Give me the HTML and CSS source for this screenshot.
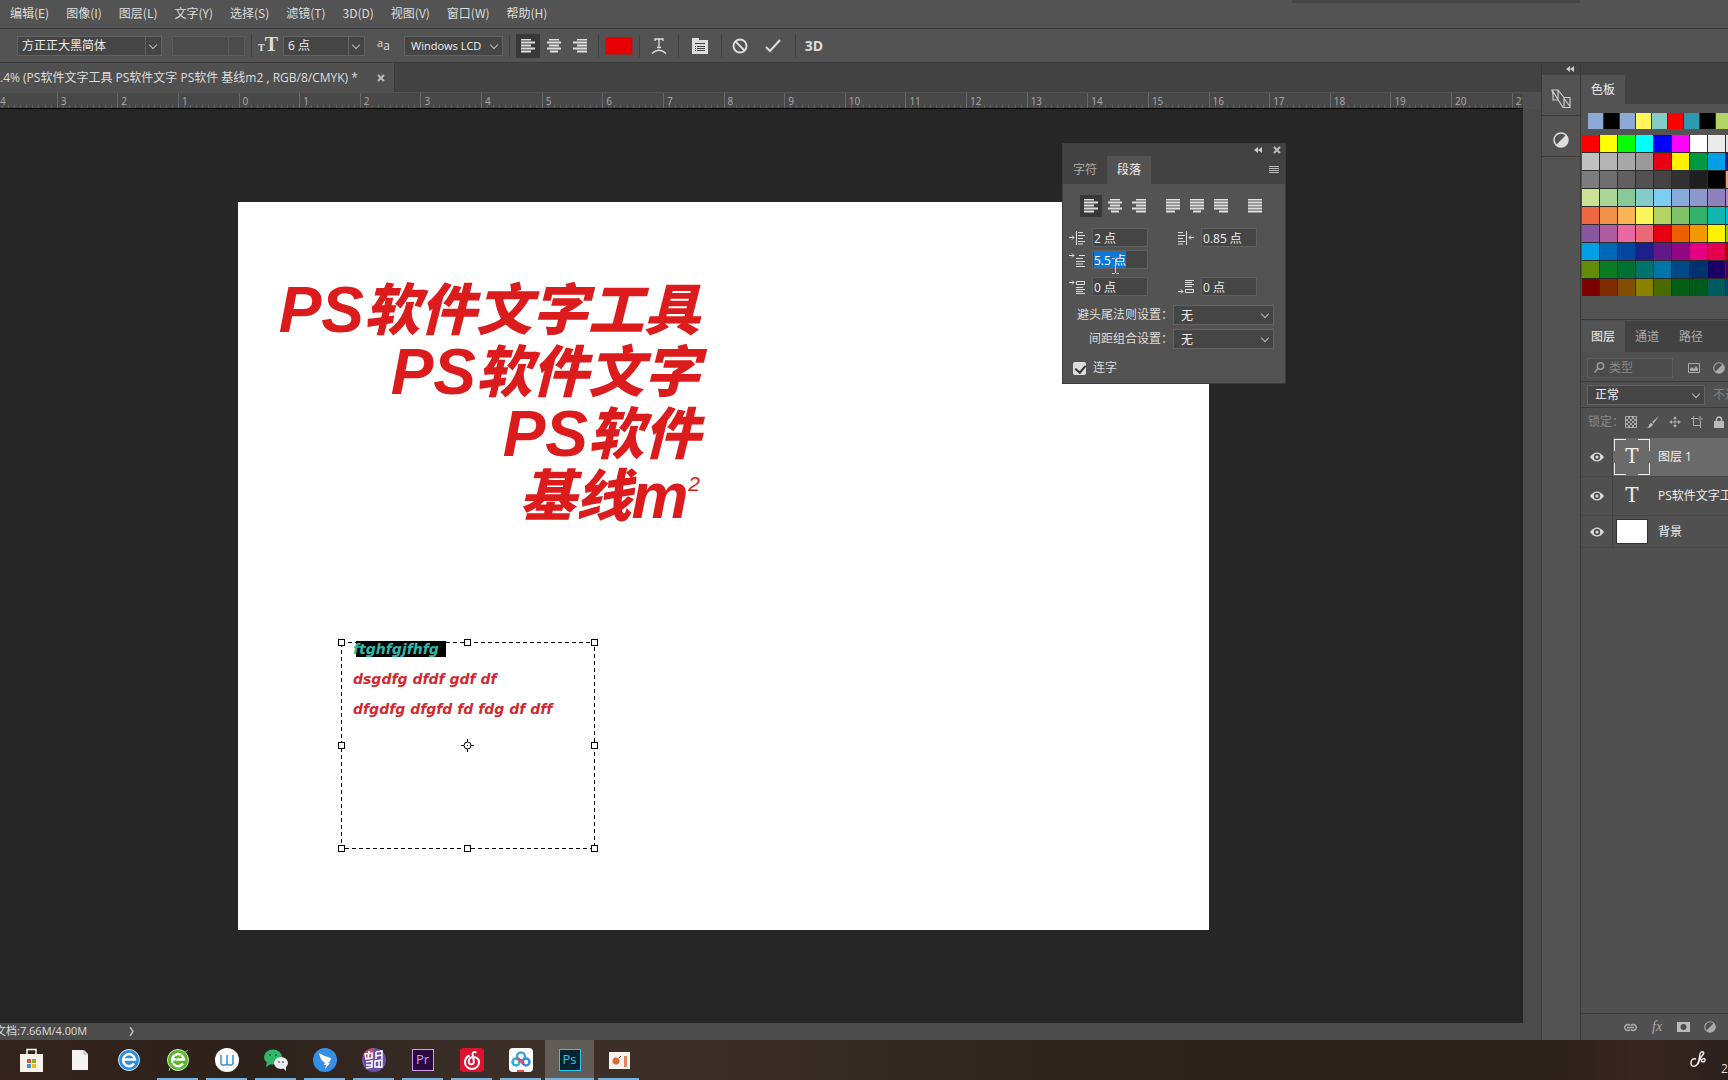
FILE: index.html
```html
<!DOCTYPE html>
<html lang="zh-CN">
<head>
    <meta charset="UTF-8">
    <meta name="viewport" content="width=device-width, initial-scale=1.0">
    <title>PS软件文字工具</title>
    <link rel="stylesheet" href="styles.css">
</head>
<body>
    <!-- 公用图标 -->
    <svg class="symbols" aria-hidden="true">
        <symbol id="i-left" viewBox="0 0 14 14"><path d="M0 .5h10M0 3.5h14M0 6.5h10M0 9.5h14M0 12.5h10"/></symbol>
        <symbol id="i-center" viewBox="0 0 14 14"><path d="M2 .5h10M0 3.5h14M2 6.5h10M0 9.5h14M3 12.5h8"/></symbol>
        <symbol id="i-right" viewBox="0 0 14 14"><path d="M4 .5h10M0 3.5h14M4 6.5h10M0 9.5h14M4 12.5h10"/></symbol>
        <symbol id="i-jleft" viewBox="0 0 14 14"><path d="M0 .5h14M0 3.5h14M0 6.5h14M0 9.5h14M0 12.5h9"/></symbol>
        <symbol id="i-jcenter" viewBox="0 0 14 14"><path d="M0 .5h14M0 3.5h14M0 6.5h14M0 9.5h14M3 12.5h8"/></symbol>
        <symbol id="i-jright" viewBox="0 0 14 14"><path d="M0 .5h14M0 3.5h14M0 6.5h14M0 9.5h14M5 12.5h9"/></symbol>
        <symbol id="i-jall" viewBox="0 0 14 14"><path d="M0 .5h14M0 3.5h14M0 6.5h14M0 9.5h14M0 12.5h14"/></symbol>
        <symbol id="i-collapse" viewBox="0 0 8 6"><path d="M4 0v6L0 3zM8 0v6L4 3z"/></symbol>
        <symbol id="i-close" viewBox="0 0 8 8"><path d="M1 1l6 6M7 1L1 7"/></symbol>
        <symbol id="i-half" viewBox="0 0 16 16"><circle cx="8" cy="8" r="7" fill="none" stroke="currentColor" stroke-width="1.5"/><path d="M13 3A7 7 0 0 1 3 13z" fill="currentColor"/></symbol>
        <symbol id="i-eye" viewBox="0 0 14 10"><path d="M0 5Q7-4 14 5Q7 14 0 5z" fill="#ddd"/><circle cx="7" cy="5" r="3.2" fill="#4f4f4f"/><circle cx="7" cy="5" r="1.5" fill="#ddd"/></symbol>
    </svg>

    <nav class="menubar">
        <button>编辑(E)</button>
        <button>图像(I)</button>
        <button>图层(L)</button>
        <button>文字(Y)</button>
        <button>选择(S)</button>
        <button>滤镜(T)</button>
        <button>3D(D)</button>
        <button>视图(V)</button>
        <button>窗口(W)</button>
        <button>帮助(H)</button>
        <div class="screen-tip"></div>
    </nav>

    <div class="options">
        <span class="drop drop-split w-font"><select aria-label="字体"><option>方正正大黑简体</option></select></span>
        <span class="drop drop-split w-style off"><select aria-label="字体样式" disabled><option></option></select></span>
        <i class="sep"></i>
        <span class="size-icon"><small>T</small>T</span>
        <span class="drop drop-split w-size"><select aria-label="字体大小"><option>6 点</option></select></span>
        <span class="aa-icon"><sup>a</sup>a</span>
        <span class="drop w-aa"><select aria-label="消除锯齿"><option>Windows LCD</option></select></span>
        <i class="sep"></i>
        <span class="group">
            <button class="tool active" aria-label="左对齐"><svg class="lines"><use href="#i-left"/></svg></button>
            <button class="tool" aria-label="居中"><svg class="lines"><use href="#i-center"/></svg></button>
            <button class="tool" aria-label="右对齐"><svg class="lines"><use href="#i-right"/></svg></button>
        </span>
        <i class="sep"></i>
        <button class="color" aria-label="文本颜色"></button>
        <i class="sep"></i>
        <button class="tool w-warp" aria-label="变形文字"><svg width="16" height="18" viewBox="0 0 16 18" fill="none" stroke="#ddd" stroke-width="1.3"><path d="M4 4V2h8v2M8 2v8M6 10.500h4M1 16.500Q8 10 15 16.500"/></svg></button>
        <i class="sep"></i>
        <button class="tool w-panel" aria-label="面板"><svg width="16" height="16" viewBox="0 0 16 16"><path d="M0 0h7v2h9v14H0z" fill="#ddd"/><path d="M3 5.500h10M3 8.500h1M5 8.500h8M3 10.500h1M5 10.500h8M3 12.500h1M5 12.500h8" stroke="#444"/></svg></button>
        <i class="sep"></i>
        <button class="tool" aria-label="取消"><svg width="16" height="16" viewBox="0 0 16 16" fill="none" stroke="#ddd" stroke-width="2"><circle cx="8" cy="8" r="6.500"/><path d="M3.500 3.500l9 9"/></svg></button>
        <button class="tool w-ok" aria-label="提交"><svg width="16" height="14" viewBox="0 0 16 14" fill="none" stroke="#ddd" stroke-width="2"><path d="M1 8l4 4L15 1"/></svg></button>
        <i class="sep"></i>
        <button class="tool three-d">3D</button>
    </div>

    <div class="workspace">
        <section class="document">
            <div class="doc-tabs">
                <div class="doc-tab"><span>.4% (PS软件文字工具 PS软件文字 PS软件 基线m2 , RGB/8/CMYK) *</span><button class="close" aria-label="关闭"><svg class="x"><use href="#i-close"/></svg></button></div>
            </div>
            <div class="ruler" id="ruler"></div>
            <div class="view">
                <div class="canvas">
                    <div class="page">
                        <div class="title">
                            <p><span>PS</span>软件文字工具</p>
                            <p><span>PS</span>软件文字</p>
                            <p><span>PS</span>软件</p>
                            <p>基线<span>m</span><sup>2</sup></p>
                        </div>
                        <div class="textbox">
                            <p><mark>ftghfgjfhfg</mark></p>
                            <p>dsgdfg dfdf gdf df</p>
                            <p>dfgdfg dfgfd fd fdg df dff</p>
                            <svg class="frame">
                                <rect width="100%" height="100%"/>
                            </svg>
                            <i class="handle tl"></i><i class="handle tc"></i><i class="handle tr"></i>
                            <i class="handle ml"></i><i class="handle mr"></i>
                            <i class="handle bl"></i><i class="handle bc"></i><i class="handle br"></i>
                            <svg class="pivot" width="13" height="13" viewBox="0 0 13 13" fill="none" stroke="#000"><circle cx="6.500" cy="6.500" r="3.500"/><path d="M6.500 0v3M6.500 10v3M0 6.500h3M10 6.500h3M6 6.500h1"/></svg>
                        </div>
                    </div>

                    <aside class="para">
                        <header>
                            <div class="para-top">
                                <svg class="tri"><use href="#i-collapse"/></svg>
                                <button class="close" aria-label="关闭面板"><svg class="x"><use href="#i-close"/></svg></button>
                            </div>
                            <div class="tabs">
                                <button>字符</button>
                                <button class="on">段落</button>
                                <svg class="menu" width="10" height="8" viewBox="0 0 10 8" stroke="#bbb"><path d="M0 .5h10M0 2.500h10M0 4.500h10M0 6.500h10"/></svg>
                            </div>
                        </header>
                        <div class="aligns">
                            <button class="tool active" aria-label="左对齐文本"><svg class="lines"><use href="#i-left"/></svg></button>
                            <button class="tool" aria-label="居中对齐文本"><svg class="lines"><use href="#i-center"/></svg></button>
                            <button class="tool" aria-label="右对齐文本"><svg class="lines"><use href="#i-right"/></svg></button>
                            <button class="tool gap" aria-label="最后一行左对齐"><svg class="lines"><use href="#i-jleft"/></svg></button>
                            <button class="tool" aria-label="最后一行居中对齐"><svg class="lines"><use href="#i-jcenter"/></svg></button>
                            <button class="tool" aria-label="最后一行右对齐"><svg class="lines"><use href="#i-jright"/></svg></button>
                            <button class="tool gap" aria-label="全部对齐"><svg class="lines"><use href="#i-jall"/></svg></button>
                        </div>
                        <div class="indents">
                            <label><svg viewBox="0 0 16 14"><path d="M0 6.500h5M3 4.500l2 2-2 2M7.500 0v14M9 1.500h5M9 4.500h7M9 7.500h5M9 10.500h7M9 13h5"/></svg><input type="text" value="2 点" aria-label="左缩进"></label>
                            <label><svg viewBox="0 0 16 14"><path d="M0 1.500h5M0 4.500h7M0 7.500h5M0 10.500h7M0 13h5M8.500 0v14M16 6.500h-5M13 4.500l-2 2 2 2"/></svg><input type="text" value="0.85 点" aria-label="右缩进"></label>
                            <label><svg viewBox="0 0 16 14"><path d="M0 2.500h5M3 .5l2 2-2 2M10 2.500h6M7 5.500h7M7 8.500h9M7 11h7M7 13.500h9"/></svg><input type="text" id="first" value="5.5 点" aria-label="首行缩进"></label>
                        </div>
                        <div class="indents spacing">
                            <label><svg viewBox="0 0 16 14"><path d="M0 2.500h5M3 .5l2 2-2 2M7.500 1.500h8v3h-8zM7 7.500h7M7 9.500h9M7 11.500h7M7 13.500h9"/></svg><input type="text" value="0 点" aria-label="段前添加空格"></label>
                            <label><svg viewBox="0 0 16 14"><path d="M0 11.500h5M3 9.500l2 2-2 2M7 .5h9M7 2.500h7M7 4.500h9M7 6.500h7M7.500 9.500h8v3h-8z"/></svg><input type="text" value="0 点" aria-label="段后添加空格"></label>
                        </div>
                        <div class="rules">
                            <label for="kinsoku">避头尾法则设置：</label>
                            <span class="drop"><select id="kinsoku"><option>无</option></select></span>
                            <label for="mojikumi">间距组合设置：</label>
                            <span class="drop"><select id="mojikumi"><option>无</option></select></span>
                        </div>
                        <label class="hyphen"><input type="checkbox" checked>连字</label>
                        <svg class="caret" width="7" height="16" viewBox="0 0 7 16" fill="none" stroke="#ccc"><path d="M0 .5h2.500l1 1 1-1H7M3.500 1v14M0 15.500h2.500l1-1 1 1H7"/></svg>
                    </aside>
                </div>
                <div class="scroll"></div>
            </div>
            <footer class="status"><span>文档:7.66M/4.00M</span><svg width="5" height="9" viewBox="0 0 5 9" fill="none" stroke="#bbb" stroke-width="1.500"><path d="M1 0l3 4.500L1 9"/></svg></footer>
        </section>

        <aside class="strip">
            <div class="strip-top"><svg class="tri"><use href="#i-collapse"/></svg></div>
            <button aria-label="历史"><svg width="20" height="20" viewBox="0 0 20 20" fill="none" stroke="#ccc" stroke-width="1.200"><path d="M1 1h6v10H2V5zM1 1l11 17.500h7V8.500h-6v9M7 1l6 7.500M13 9.500l6 8"/></svg></button>
            <button aria-label="调整"><svg width="16" height="16"><use href="#i-half"/></svg></button>
        </aside>

        <aside class="panels">
            <div class="panels-top"></div>
            <section class="swatch-panel">
                <div class="tabs"><button class="on">色板</button></div>
                <div class="recent" id="recent"></div>
                <div class="swatches" id="swatches"></div>
            </section>
            <section class="layers">
                <div class="tabs">
                    <button class="on">图层</button>
                    <button>通道</button>
                    <button>路径</button>
                </div>
                <div class="filter">
                    <label class="search"><svg width="11" height="11" viewBox="0 0 11 11" fill="none" stroke="#999" stroke-width="1.500"><circle cx="6.500" cy="4" r="3.200"/><path d="M4 6.500L.5 10.500"/></svg><input type="text" placeholder="类型" aria-label="类型"></label>
                    <svg width="12" height="10" viewBox="0 0 12 10"><path d="M.5.500h11v9H.5z" fill="none" stroke="#aaa"/><path d="M2 8V6l2-2 2 2 2-3 2 3v2z" fill="#aaa"/></svg>
                    <svg width="12" height="12"><use href="#i-half"/></svg>
                </div>
                <div class="blend">
                    <span class="drop"><select aria-label="混合模式"><option>正常</option></select></span>
                    <span class="dim">不透明度</span>
                </div>
                <div class="locks">
                    <span>锁定：</span>
                    <svg viewBox="0 0 12 12"><path d="M.5.500h11v11H.5z" fill="none" stroke="#aaa"/><path d="M3 1h2v2H3zM7 1h2v2H7zM1 3h2v2H1zM5 3h2v2H5zM9 3h2v2H9zM3 5h2v2H3zM7 5h2v2H7zM1 7h2v2H1zM5 7h2v2H5zM9 7h2v2H9zM3 9h2v2H3zM7 9h2v2H7z" fill="#aaa"/></svg>
                    <svg viewBox="0 0 12 12"><path d="M12 0L5 6l1.500 1.500zM4.500 7L6 8.500Q4 12 0 12q2-1 2-3 1-2 2.500-2z" fill="#bbb"/></svg>
                    <svg viewBox="0 0 12 12"><path d="M6 1v10M1 6h10" stroke="#aaa"/><path d="M6 0l2 3H4zM6 12l2-3H4zM0 6l3-2v4zM12 6L9 4v4z" fill="#aaa"/></svg>
                    <svg viewBox="0 0 12 12"><path d="M2.500 0v9.500H10M0 2.500h7l2.500 2.500v7M9 0v3h3" fill="none" stroke="#aaa"/></svg>
                    <svg viewBox="0 0 12 12"><path d="M1 5h10v7H1z" fill="#bbb"/><path d="M3.500 5V3.500a2.500 2.500 0 0 1 5 0V5" fill="none" stroke="#bbb" stroke-width="1.500"/></svg>
                </div>
                <ul class="list">
                    <li class="current"><span class="eye"><svg><use href="#i-eye"/></svg></span><span class="type corners">T</span><span>图层 1</span></li>
                    <li><span class="eye"><svg><use href="#i-eye"/></svg></span><span class="type">T</span><span>PS软件文字工具</span></li>
                    <li class="short"><span class="eye"><svg><use href="#i-eye"/></svg></span><span class="thumb"></span><span>背景</span></li>
                </ul>
                <footer>
                    <svg width="15" height="9" viewBox="0 0 15 9" fill="none" stroke="#aaa" stroke-width="1.500"><path d="M7 2.500A3 3 0 1 0 7 6.500M8 2.500A3 3 0 1 1 8 6.500M4 4.500h7"/></svg>
                    <span class="fx">fx</span>
                    <svg width="13" height="10" viewBox="0 0 13 10"><path d="M0 0h13v10H0z" fill="#bbb"/><circle cx="6.500" cy="5" r="3" fill="#4f4f4f"/></svg>
                    <svg width="12" height="12"><use href="#i-half"/></svg>
                </footer>
            </section>
        </aside>
    </div>

    <div class="taskbar">
        <button aria-label="应用商店"><svg viewBox="0 0 24 24"><path d="M8 6V1.500h9V6" fill="none" stroke="#fff" stroke-width="1.500"/><path d="M1 6h23v18H1z" fill="#f6f2ea"/><path d="M8 11h4v4H8z" fill="#e5532d"/><path d="M13 11h4v4h-4z" fill="#7db72f"/><path d="M8 16h4v4H8z" fill="#2f9be0"/><path d="M13 16h4v4h-4z" fill="#f4b822"/></svg></button>
        <button aria-label="文档"><svg viewBox="0 0 24 24"><path d="M4 2h12l4 4v16H4z" fill="#f4f4f0"/><path d="M16 2v4h4" fill="none" stroke="#aaa"/></svg></button>
        <button aria-label="浏览器"><svg viewBox="0 0 24 24"><circle cx="12" cy="12" r="10.500" fill="#2a8fe0" stroke="#dcecf8"/><path d="M17 15.500A6 6 0 1 1 18 11.500H7" fill="none" stroke="#fff" stroke-width="2.500"/></svg></button>
        <button class="run" aria-label="360浏览器"><svg viewBox="0 0 24 24"><circle cx="12" cy="12" r="10.500" fill="#5db52c" stroke="#d6f0c0"/><path d="M17 15.500A6 6 0 1 1 18 11.500H7" fill="none" stroke="#fff" stroke-width="2.500"/><path d="M3 23Q4 14 22 2" fill="none" stroke="#78cc3a"/></svg></button>
        <button class="run" aria-label="WPS"><svg viewBox="0 0 24 24"><circle cx="12" cy="12" r="12" fill="#fff"/><path d="M6 7v8q0 2 2 2h2q2 0 2-2V7M12 15q0 2 2 2h2q2 0 2-2V7" fill="none" stroke="#3d90c8" stroke-width="1.500"/></svg></button>
        <button class="run" aria-label="微信"><svg viewBox="0 0 24 24"><ellipse cx="9" cy="9" rx="9" ry="7.500" fill="#2fb668"/><path d="M3 14l-1 5 5-3z" fill="#2fb668"/><ellipse cx="17" cy="15" rx="7" ry="6" fill="#eee"/><path d="M19 20l3 3v-5z" fill="#eee"/><circle cx="6" cy="7" r="1" fill="#17663a"/><circle cx="12" cy="7" r="1" fill="#17663a"/><circle cx="15" cy="14" r="1" fill="#777"/><circle cx="19" cy="14" r="1" fill="#777"/></svg></button>
        <button class="run" aria-label="钉钉"><svg viewBox="0 0 24 24"><circle cx="12" cy="12" r="12" fill="#358fe6"/><path d="M6 5q6 4 12 5 0 3-3 5h2l-5 6 1-4h-2l1-2q-5-3-6-10z" fill="#fff"/></svg></button>
        <button class="run" aria-label="字体助手"><svg viewBox="0 0 24 24"><circle cx="12" cy="12" r="12" fill="#6950a6"/><path d="M1 8A12 12 0 0 1 12 0v12z" fill="#c04c78"/><path d="M3 6l7-1v5l-6 1zM7 3L6 11M14 4l6-1v8M14 4v7M14 8l6-1M4 14l6-1v6l-6 1M4 17h6M13 13l7-1v7h-7zM17 12v8" fill="none" stroke="#fff" stroke-width="1.500"/></svg></button>
        <button class="run" aria-label="Premiere"><span class="adobe pr">Pr</span></button>
        <button class="run" aria-label="网易云音乐"><svg viewBox="0 0 24 24"><rect width="24" height="24" rx="3" fill="#dc1230"/><path d="M16.500 4.500Q13 3 12.500 6l1.300 7a2.600 2.600 0 1 1-5 0q.2-3.500 4.200-4 6 0 6 5.500a7 6.500 0 1 1-14 0q0-5 4.500-7" fill="none" stroke="#fff" stroke-width="2"/></svg></button>
        <button class="run" aria-label="百度网盘"><svg viewBox="0 0 24 24"><rect width="24" height="24" rx="4" fill="#fff"/><g fill="none" stroke-width="2.500"><circle cx="12" cy="8.500" r="4" stroke="#3aa4e6"/><circle cx="7" cy="14" r="3.500" stroke="#2ab0e0"/><circle cx="17" cy="14" r="3.500" stroke="#3a8ae0"/><path d="M8 10q2 1 4 3 2 2 3 3" stroke="#e8455a"/></g><path d="M8 22h7v2H8z" fill="#e8455a"/></svg></button>
        <button class="run current" aria-label="Photoshop"><span class="adobe ps">Ps</span></button>
        <button class="run" aria-label="录屏"><svg viewBox="0 0 24 24"><path d="M2 4h21v17H2z" fill="#f5f1ec"/><circle cx="9" cy="13" r="3.500" fill="#d86a3c"/><path d="M17 8h3v11h-3z" fill="#e0855c"/><path d="M12 10l2-2" stroke="#555"/></svg></button>
        <svg class="pen" width="16" height="16" viewBox="0 0 16 16" fill="none" stroke="#eee" stroke-width="1.500"><path d="M6 8Q1 7 1 12q0 4 4 3 3-1 4-6l1-6q1-3 3-2t-2 5L8 13M11 9q4-3 4 0 0 3-4 1"/></svg>
        <span class="clock">2</span>
    </div>

    <script>
        const recent = ['#8ca9d8', '#000', '#8ca9d8', '#fff45c', '#85ccc8', '#f00', '#2a9bb0', '#000', '#b3d465', '#fff'];
        const swatches = [
            ['#f00', '#ff0', '#0f0', '#0ff', '#00f', '#f0f', '#fff', '#ebebeb', '#e1e1e1'],
            ['#c0c0c0', '#b4b4b4', '#a8a8a8', '#9a9a9a', '#e60012', '#fff100', '#009944', '#00a0e9', '#1d2088'],
            ['#7d7d7d', '#6f6f6f', '#606060', '#525252', '#444', '#323232', '#1f1f1f', '#000', '#f19c80'],
            ['#cce198', '#acd598', '#89c997', '#84ccc9', '#7ecef4', '#88abda', '#8c97cb', '#8f82bc', '#aa89bd'],
            ['#ec6941', '#f19149', '#f8b551', '#fff45c', '#b3d465', '#80c269', '#32b16c', '#13b5b1', '#00b7ee'],
            ['#8957a1', '#ae5da1', '#ea68a2', '#eb6877', '#e60012', '#eb6100', '#f39800', '#fff100', '#8fc31f'],
            ['#00a0e9', '#0068b7', '#00479d', '#1d2088', '#601986', '#920783', '#e4007f', '#e5004f', '#a40000'],
            ['#638c0b', '#097c25', '#007130', '#00736d', '#0075a9', '#004986', '#003270', '#1b006a', '#500047'],
            ['#7d0000', '#7f2d00', '#834e00', '#8a8000', '#486a00', '#005e15', '#005a1a', '#005b5f', '#00486a']
        ];
        const cell = c => `<i style="background:${c}"></i>`;
        document.getElementById('recent').innerHTML = recent.map(cell).join('');
        document.getElementById('swatches').innerHTML = swatches.flat().map(cell).join('');

        // 标尺从 -4 到 21
        let marks = '';
        for (let i = -4; i <= 21; i++) {
            marks += `<span>${Math.abs(i)}</span>`;
        }
        document.getElementById('ruler').innerHTML = marks;

        document.getElementById('first').select();
    </script>
</body>
</html>
```
FILE: styles.css
```css
:root {
    --unit: calc(970px / 16);
}
* {
    box-sizing: border-box;
}
body {
    margin: 0;
    height: 100vh;
    display: flex;
    flex-direction: column;
    overflow: hidden;
    background: #535353;
    color: #ddd;
    font-family: "Open Sans", "Noto Sans CJK SC", sans-serif;
    font-size: 12px;
    line-height: 18px;
}
button, input, select {
    margin: 0;
    padding: 0;
    border: 0;
    background: none;
    color: inherit;
    font: inherit;
    outline: none;
}
p, ul {
    margin: 0;
    padding: 0;
}
svg {
    flex: none;
}
.symbols {
    position: absolute;
    width: 0;
    height: 0;
}
.lines {
    display: block;
    width: 14px;
    height: 14px;
    stroke: #e0e0e0;
    stroke-width: 2;
}
.tri {
    width: 8px;
    height: 6px;
    fill: #ccc;
}
.x {
    display: block;
    width: 8px;
    height: 8px;
    stroke: #bbb;
    stroke-width: 2;
}

/* 菜单栏 */
.menubar {
    position: relative;
    flex: none;
    display: flex;
    gap: 17px;
    height: 29px;
    padding: 0 10px;
    border-bottom: 1px solid #3a3a3a;
    font-family: "Noto Sans CJK SC", sans-serif;
}
.menubar button {
    padding-bottom: 2px;
}
.screen-tip {
    position: absolute;
    top: 0;
    right: 148px;
    width: 288px;
    height: 3px;
    background: #464646;
}

/* 选项栏 */
.options {
    flex: none;
    display: flex;
    align-items: center;
    gap: 5px;
    height: 34px;
    padding: 0 17px;
    border-bottom: 1px solid #3a3a3a;
}
.sep {
    width: 1px;
    height: 22px;
    margin: 0 1px;
    background: #404040;
}
.drop {
    position: relative;
    display: block;
    height: 20px;
    border: 1px solid #626262;
    background: #454545;
}
.drop select {
    appearance: none;
    display: block;
    width: 100%;
    height: 18px;
    padding: 0 4px;
    color: #eee;
}
.drop::after {
    content: "";
    position: absolute;
    top: 5px;
    right: 5px;
    width: 5px;
    height: 5px;
    border: solid #bbb;
    border-width: 0 1px 1px 0;
    transform: rotate(45deg);
    pointer-events: none;
}
.drop-split::before {
    content: "";
    position: absolute;
    top: 0;
    right: 15px;
    width: 1px;
    height: 18px;
    background: #626262;
    pointer-events: none;
}
.drop.off {
    border-color: #5c5c5c;
    background: #4b4b4b;
}
.off::before {
    background: #5c5c5c;
}
.off::after {
    display: none;
}
.w-font { width: 145px; }
.w-style { width: 73px; margin-left: 5px; }
.w-size { width: 82px; }
.w-aa { width: 99px; }
.w-aa select {
    padding-left: 6px;
    font-size: 11px;
}
.size-icon {
    width: 20px;
    font: bold 20px/20px "Liberation Serif", serif;
    white-space: nowrap;
}
.size-icon small {
    font-size: 10px;
}
.aa-icon {
    width: 29px;
    padding-left: 7px;
    font-size: 12px;
    line-height: 16px;
}
.aa-icon sup {
    font-size: 11px;
    line-height: 0;
    vertical-align: 3px;
}
.group {
    display: flex;
    gap: 2px;
}
.tool {
    display: flex;
    align-items: center;
    justify-content: center;
    width: 24px;
    height: 24px;
}
.tool.active {
    background: #383838;
}
.w-warp { width: 26px; }
.w-panel { width: 30px; }
.w-ok { width: 32px; }
.three-d {
    font-size: 14px;
    font-weight: bold;
}
.color {
    width: 28px;
    height: 18px;
    border: 1px solid #8a3030;
    background: #e80000;
}

/* 文档区 */
.workspace {
    flex: 1;
    display: flex;
    min-height: 0;
    background: #4f4f4f;
}
.document {
    flex: 1;
    display: flex;
    flex-direction: column;
    min-width: 0;
}
.doc-tabs {
    flex: none;
    display: flex;
    height: 29px;
    background: #424242;
}
.doc-tab {
    display: flex;
    align-items: center;
    gap: 19px;
    padding-right: 9px;
    background: #505050;
    border-right: 1px solid #383838;
}
.ruler {
    flex: none;
    display: flex;
    height: 17px;
    margin-right: 18px;
    overflow: hidden;
    border-top: 1px solid #525252;
    border-bottom: 1px solid #000;
    background: repeating-linear-gradient(90deg, #606060 0 1px, transparent 1px calc(var(--unit) / 10)) -4px 12px / 110% 3px no-repeat #484848;
}
.ruler span {
    flex: 0 0 var(--unit);
    padding-left: 3px;
    border-left: 1px solid #666;
    color: #aaa;
    font-size: 10px;
    line-height: 17px;
}
.ruler span:first-child {
    margin-left: -4px;
}
.view {
    flex: 1;
    display: flex;
    min-height: 0;
}
.canvas {
    position: relative;
    flex: 1;
    background: #262626;
    overflow: hidden;
}
.scroll {
    width: 18px;
    background: #4b4b4b;
}
.status {
    flex: none;
    display: flex;
    align-items: center;
    gap: 42px;
    height: 17px;
    padding-bottom: 1px;
    background: #4b4b4b;
    font-size: 11px;
}
.status span {
    margin-left: -5px;
}
.page {
    position: absolute;
    left: 238px;
    top: 93px;
    width: 971px;
    height: 728px;
    background: #fff;
}
.title {
    position: absolute;
    left: 40px;
    top: 78px;
    width: 422px;
    color: #dc1c1c;
    font: italic 900 56px/62px "Liberation Sans", "Noto Sans CJK SC", sans-serif;
    text-align: right;
    white-space: nowrap;
}
.title p {
    height: 62px;
}
.title span {
    font-size: 64px;
    line-height: 0;
    vertical-align: -2px;
}
.title sup {
    font-size: 21px;
    font-weight: normal;
    line-height: 0;
    vertical-align: 25px;
}
.textbox {
    position: absolute;
    left: 103px;
    top: 440px;
    width: 254px;
    height: 207px;
    padding: 0 12px;
    color: #d02a30;
    font: italic bold 14px/30px "DejaVu Sans", sans-serif;
    font-variant-ligatures: none;
    white-space: nowrap;
}
.textbox p:first-child {
    line-height: 14px;
    padding-bottom: 8px;
}
.textbox mark {
    padding-right: 7px;
    background: linear-gradient(#000, #000) 3px 0 no-repeat;
    color: #30b8ac;
}
.frame {
    position: absolute;
    left: 0;
    top: 0;
    width: 100%;
    height: 100%;
}
.frame rect {
    fill: none;
    stroke: #000;
    stroke-width: 2;
    stroke-dasharray: 4 3;
}
.handle {
    position: absolute;
    width: 7px;
    height: 7px;
    border: 1px solid #000;
    background: #fff;
}
.tl, .tc, .tr { top: -3px; }
.ml, .mr { top: 100px; }
.bl, .bc, .br { bottom: -3px; }
.tl, .ml, .bl { left: -3px; }
.tr, .mr, .br { right: -3px; }
.tc, .bc { left: 123px; }
.pivot {
    position: absolute;
    left: 120px;
    top: 97px;
}

/* 标签页 */
.tabs {
    display: flex;
    background: #424242;
}
.tabs button {
    padding: 0 10px;
    color: #aaa;
}
.tabs .on {
    background: #535353;
    color: #eee;
}

/* 段落面板 */
.para {
    position: absolute;
    left: 1062px;
    top: 34px;
    width: 224px;
    padding-bottom: 6px;
    border: 1px solid #3c3c3c;
    background: #535353;
}
.para header {
    background: #424242;
}
.para-top {
    display: flex;
    align-items: center;
    justify-content: flex-end;
    gap: 11px;
    height: 12px;
    padding-right: 4px;
}
.para .tabs {
    height: 28px;
    align-items: stretch;
}
.para .menu {
    margin: 10px 6px 0 auto;
}
.aligns {
    display: flex;
    padding: 11px 17px 0;
    gap: 2px;
}
.aligns .tool {
    width: 22px;
    height: 22px;
}
.aligns .gap {
    margin-left: 10px;
}
.indents {
    display: grid;
    grid-template-columns: 109px 109px;
    row-gap: 3px;
    padding: 11px 0 0 6px;
}
.indents label {
    display: flex;
    align-items: center;
    gap: 7px;
}
.indents svg {
    width: 16px;
    height: 14px;
    fill: none;
    stroke: #ddd;
}
.indents input {
    width: 56px;
    height: 19px;
    padding: 0 1px;
    border: 1px solid #606060;
    background: #454545;
    color: #eee;
}
.indents input::selection {
    background: #0a78d7;
    color: #fff;
}
.spacing {
    padding-top: 8px;
}
.rules {
    display: grid;
    grid-template-columns: 1fr 101px;
    row-gap: 4px;
    padding: 9px 11px 0 0;
    line-height: 20px;
    text-align: right;
}
.rules .drop select {
    padding-left: 7px;
}
.hyphen {
    display: flex;
    align-items: center;
    gap: 7px;
    padding: 10px 10px 0;
}
.hyphen input {
    appearance: none;
    position: relative;
    width: 13px;
    height: 13px;
    border-radius: 2px;
    background: #ddd;
}
.hyphen input:checked::after {
    content: "";
    position: absolute;
    left: 4px;
    top: 1px;
    width: 5px;
    height: 8px;
    border: solid #333;
    border-width: 0 2px 2px 0;
    transform: rotate(40deg);
}
.caret {
    position: absolute;
    left: 49px;
    top: 114px;
}

/* 折叠面板条 */
.strip {
    flex: none;
    display: flex;
    flex-direction: column;
    width: 40px;
    border-left: 1px solid #383838;
    border-right: 1px solid #383838;
    background: #535353;
}
.strip-top {
    display: flex;
    align-items: center;
    justify-content: flex-end;
    height: 12px;
    padding-right: 6px;
    background: #424242;
}
.strip button {
    display: flex;
    align-items: center;
    justify-content: center;
    height: 41px;
    padding-top: 8px;
    border-bottom: 1px solid #3c3c3c;
}

/* 右侧面板 */
.panels {
    flex: none;
    display: flex;
    flex-direction: column;
    width: 147px;
    overflow: hidden;
}
.panels-top {
    height: 12px;
    background: #424242;
}
.swatch-panel {
    height: 245px;
    background: #535353;
    border-bottom: 1px solid #383838;
}
.swatch-panel .tabs {
    height: 29px;
}
.recent {
    display: flex;
    width: 160px;
    margin: 9px 0 6px 7px;
}
.recent i {
    width: 16px;
    height: 16px;
    border-right: 1px solid #333;
}
.swatches {
    display: grid;
    grid-template-columns: repeat(9, 17px);
    grid-auto-rows: 17px;
    gap: 1px;
    width: 162px;
    margin-left: 1px;
    background: #2c2c2c;
}
.layers {
    flex: 1;
    display: flex;
    flex-direction: column;
    padding-top: 1px;
    background: #505050;
}
.layers .tabs {
    height: 31px;
}
.filter {
    display: flex;
    align-items: center;
    height: 30px;
    padding: 2px 6px 0;
    border-bottom: 1px solid #3c3c3c;
}
.search {
    flex: none;
    display: flex;
    align-items: center;
    gap: 4px;
    width: 86px;
    height: 20px;
    padding-left: 6px;
    margin-right: 15px;
    border: 1px solid #5c5c5c;
    background: #4c4c4c;
}
.search input {
    width: 50px;
}
.search input::placeholder {
    color: #888;
}
.filter > svg {
    margin-right: 13px;
    color: #aaa;
}
.blend {
    display: flex;
    align-items: center;
    gap: 8px;
    height: 26px;
    padding-left: 6px;
    border-bottom: 1px solid #3c3c3c;
    white-space: nowrap;
}
.blend .drop {
    flex: none;
    width: 118px;
}
.blend select {
    padding-left: 7px;
}
.dim {
    color: #808080;
}
.locks {
    display: flex;
    align-items: center;
    height: 30px;
    gap: 10px;
    padding: 0 0 3px 7px;
    color: #888;
}
.locks span {
    flex: none;
    width: 27px;
    white-space: nowrap;
}
.locks svg {
    width: 12px;
    height: 12px;
}
.list {
    list-style: none;
}
.list li {
    display: flex;
    align-items: center;
    height: 39px;
    border-bottom: 1px solid #464646;
    color: #eee;
    white-space: nowrap;
}
.list .short {
    height: 32px;
}
.list .current {
    background: #6a6a6a;
}
.eye {
    flex: none;
    display: flex;
    align-items: center;
    justify-content: center;
    width: 32px;
    height: 100%;
    margin-right: 1px;
    border-right: 1px solid #444;
    background: #505050;
}
.eye svg {
    width: 14px;
    height: 10px;
}
.type {
    flex: none;
    width: 36px;
    height: 36px;
    margin-right: 8px;
    font: 20px/34px "DejaVu Serif", serif;
    text-align: center;
}
.corners {
    background:
        linear-gradient(#eee, #eee) 0 0 / 12px 1px,
        linear-gradient(#eee, #eee) 100% 0 / 12px 1px,
        linear-gradient(#eee, #eee) 0 100% / 12px 1px,
        linear-gradient(#eee, #eee) 100% 100% / 12px 1px,
        linear-gradient(#eee, #eee) 0 0 / 1px 12px,
        linear-gradient(#eee, #eee) 100% 0 / 1px 12px,
        linear-gradient(#eee, #eee) 0 100% / 1px 12px,
        linear-gradient(#eee, #eee) 100% 100% / 1px 12px;
    background-repeat: no-repeat;
}
.thumb {
    flex: none;
    width: 32px;
    height: 25px;
    margin: 0 10px 0 2px;
    border: 1px solid #333;
    background: #fff;
}
.layers footer {
    display: flex;
    align-items: center;
    gap: 14px;
    height: 27px;
    margin-top: auto;
    padding-left: 42px;
    border-top: 1px solid #3c3c3c;
    color: #aaa;
}
.fx {
    width: 11px;
    font: italic 14px/18px "Liberation Serif", serif;
}

/* 任务栏 */
.taskbar {
    position: relative;
    flex: none;
    display: flex;
    height: 40px;
    padding-left: 6px;
    overflow: hidden;
    background: linear-gradient(90deg, #33231c 0, #2d221b 15%, #3c3029 30%, #3a2e26 42%, #2e241b 60%, #2d221a 90%, #38251f 95%, #2c211b 100%);
}
.taskbar button {
    position: relative;
    display: flex;
    flex: none;
    align-items: center;
    justify-content: center;
    width: 49px;
    color: #fff;
}
.taskbar button svg {
    width: 24px;
    height: 24px;
}
.run::after {
    content: "";
    position: absolute;
    left: 4px;
    bottom: 0;
    width: 41px;
    height: 2px;
    background: #76b2e0;
}
.taskbar .current {
    background: #625c56;
}
.taskbar .current::after {
    left: 0;
    width: 49px;
}
.adobe {
    width: 22px;
    height: 22px;
    border: 1px solid;
    font-size: 13px;
    line-height: 19px;
}
.pr {
    background: #2a0a3c;
    color: #d49af0;
}
.ps {
    background: #03232f;
    color: #2fc4ee;
}
.pen {
    margin: 11px 15px 0 auto;
}
.clock {
    width: 7px;
    padding-top: 20px;
}
```
